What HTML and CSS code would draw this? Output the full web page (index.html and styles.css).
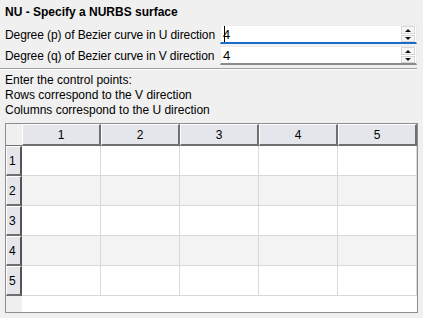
FILE: index.html
```html
<!DOCTYPE html>
<html>
	<head>
		<meta charset="UTF-8">
		<title>NU - Specify a NURBS surface</title>
		<link rel="stylesheet" href="styles.css">
	</head>
	<body>
		<div id="panel">
			<div class="title">NU - Specify a NURBS surface</div>

			<div class="field">
				<span class="label">Degree (p) of Bezier curve in U direction</span>
				<div class="spin focused">
					<span class="value"><i class="caret"></i>4</span>
					<div class="arrows">
						<span class="btn up"></span>
						<span class="btn down"></span>
					</div>
				</div>
			</div>
			<div class="field">
				<span class="label">Degree (q) of Bezier curve in V direction</span>
				<div class="spin">
					<span class="value">4</span>
					<div class="arrows">
						<span class="btn up"></span>
						<span class="btn down"></span>
					</div>
				</div>
			</div>

			<div class="sep"></div>

			<div class="notes">
				<p>Enter the control points:</p>
				<p>Rows correspond to the V direction</p>
				<p>Columns correspond to the U direction</p>
			</div>

			<div id="grid">
				<div class="corner"></div>
				<div class="colhead">1</div>
				<div class="colhead">2</div>
				<div class="colhead">3</div>
				<div class="colhead">4</div>
				<div class="colhead">5</div>

				<div class="rowhead">1</div>
				<div class="cell"></div><div class="cell"></div><div class="cell"></div><div class="cell"></div><div class="cell"></div>
				<div class="rowhead">2</div>
				<div class="cell alt"></div><div class="cell alt"></div><div class="cell alt"></div><div class="cell alt"></div><div class="cell alt"></div>
				<div class="rowhead">3</div>
				<div class="cell"></div><div class="cell"></div><div class="cell"></div><div class="cell"></div><div class="cell"></div>
				<div class="rowhead">4</div>
				<div class="cell alt"></div><div class="cell alt"></div><div class="cell alt"></div><div class="cell alt"></div><div class="cell alt"></div>
				<div class="rowhead">5</div>
				<div class="cell"></div><div class="cell"></div><div class="cell"></div><div class="cell"></div><div class="cell"></div>

				<div class="foot-left"></div>
				<div class="foot"></div>
			</div>
		</div>
	</body>
</html>
```

FILE: styles.css
```css
*{
	margin: 0;
	padding: 0;
	box-sizing: border-box;
}

body{
	background-color: #f0f0f0;
	font-family: "Liberation Sans", Arial, sans-serif;
	font-size: 12px;
	color: #000;
}

#panel{
	display: flex;
	flex-direction: column;
	padding: 5px 5px 0 5px;
	width: 423px;
}

.title{
	font-weight: bold;
	height: 19px;
	line-height: 15px;
}

/* degree inputs */
.field{
	display: flex;
	align-items: center;
	height: 21px;
}
.field .label{
	width: 215px;
	white-space: nowrap;
	letter-spacing: -0.1px;
}
.spin{
	display: flex;
	align-items: center;
	width: 197px;
	height: 19px;
	background-color: #fff;
	border: 1px solid #ececec;
	border-bottom: 2px solid #8a8a8a;
}
.spin.focused{
	border-bottom: 2px solid #1a6cc4;
}
.spin .value{
	flex: 1;
	padding-left: 2px;
	font-size: 13px;
	position: relative;
}
.caret{
	position: absolute;
	left: 3px;
	top: -1px;
	width: 1px;
	height: 16px;
	background-color: #000;
}
.arrows{
	display: flex;
	flex-direction: column;
	gap: 1px;
	margin-right: 1px;
	align-self: flex-start;
}
.btn{
	display: flex;
	align-items: center;
	justify-content: center;
	width: 14px;
	height: 8px;
	background-color: #f7f7f7;
	border: 1px solid #d6d6d6;
}
.btn.down{
	height: 7px;
}
.btn.up::after{
	content: "";
	border-left: 3px solid transparent;
	border-right: 3px solid transparent;
	border-bottom: 3px solid #111;
}
.btn.down::after{
	content: "";
	border-left: 3px solid transparent;
	border-right: 3px solid transparent;
	border-top: 3px solid #111;
}

.sep{
	height: 2px;
	margin: 2px -5px 3px -5px;
	width: 417px;
	border-top: 1px solid #a0a0a0;
	border-bottom: 1px solid #fff;
}

.notes p{
	line-height: 15px;
}

/* control point table */
#grid{
	display: grid;
	grid-template-columns: 16px repeat(5, 79px);
	grid-template-rows: 22px repeat(5, 30px) 16px;
	width: 413px;
	border: 1px solid #8a8d92;
	margin-top: 5px;
	background-color: #fff;
}
.corner{
	background-color: #f0f0f0;
	border-bottom: 1px solid #6f6f6f;
}
.colhead, .rowhead{
	display: flex;
	align-items: center;
	justify-content: center;
	background-color: #e4e6ec;
	border-top: 1px solid #fff;
	border-left: 1px solid #fff;
	border-right: 2px solid #6f6f6f;
	border-bottom: 2px solid #6f6f6f;
}
.rowhead{
	justify-content: flex-start;
	padding-left: 2px;
	border-right: 2px solid #555;
}
.cell{
	background-color: #fff;
	border-right: 1px solid #d9d9d9;
	border-bottom: 1px solid #d9d9d9;
}
.cell.alt{
	background-color: #f3f3f3;
}
.foot-left{
	background-color: #f0f0f0;
}
.foot{
	grid-column: span 5;
	background-color: #fff;
}
```
